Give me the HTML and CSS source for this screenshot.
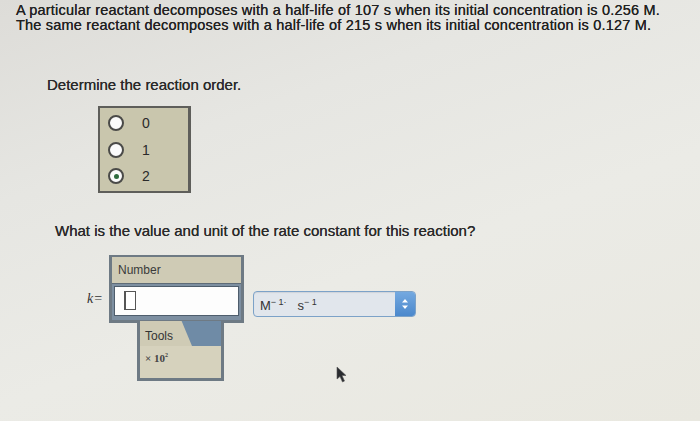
FILE: index.html
```html
<!DOCTYPE html>
<html>
<head>
<meta charset="utf-8">
<link rel="stylesheet" href="styles.css">
</head>
<body>
<div class="page">
  <p class="intro">A particular reactant decomposes with a half-life of 107 s when its initial concentration is 0.256 M.<br>The same reactant decomposes with a half-life of 215 s when its initial concentration is 0.127 M.</p>
  <p class="prompt">Determine the reaction order.</p>
  <div class="choices">
    <div class="choice"><span class="radio"></span><span class="lbl">0</span></div>
    <div class="choice"><span class="radio"></span><span class="lbl">1</span></div>
    <div class="choice"><span class="radio on"></span><span class="lbl">2</span></div>
  </div>
  <p class="prompt2">What is the value and unit of the rate constant for this reaction?</p>
  <div class="answer">
    <span class="k">k<span class="eq">=</span></span>
    <div class="numcol">
      <div class="number">
        <div class="numhead">Number</div>
        <div class="numframe"><div class="numinput"><span class="caret"></span></div></div>
      </div>
      <div class="tools">
        <div class="toolstop"><span class="toolstab">Tools</span></div>
        <div class="toolsbody">&times; 10<sup>2</sup></div>
      </div>
    </div>
    <div class="select">
      <span class="selval">M<sup>&minus; 1</sup><span class="dot">·</span>&nbsp;&nbsp;&nbsp;s<sup>&minus; 1</sup></span>
      <span class="selbtn"><svg width="8" height="12" viewBox="0 0 8 12"><path d="M4 1 L7 4.5 L1 4.5 Z M4 11 L7 7.5 L1 7.5 Z" fill="#fff"/></svg></span>
    </div>
  </div>
  <svg class="pointer" width="12" height="17" viewBox="0 0 12 17"><path d="M1 1 L1 13 L4 10.5 L6.5 16 L8.5 15 L6 9.5 L10 9.5 Z" fill="#2a2c30" stroke="#555" stroke-width="0.6"/></svg>
</div>
</body>
</html>
```
FILE: styles.css
```css
html, body { margin: 0; padding: 0; }
body {
  width: 700px;
  height: 421px;
  overflow: hidden;
  background: linear-gradient(160deg, #dddcd8 0%, #e6e6e2 30%, #ebebe6 60%, #e9e8e0 100%);
  font-family: "Liberation Sans", Arial, sans-serif;
  color: #2a2a2a;
}
.page {
  position: relative;
  height: 421px;
  padding: 3px 0 0 16px;
  box-sizing: border-box;
}
.intro {
  margin: 0;
  font-size: 14.5px;
  line-height: 15px;
  letter-spacing: 0.2px;
  color: #222;
  text-shadow: 0 0 0.6px #222;
}
.prompt {
  margin: 44px 0 0 31px;
  font-size: 15px;
  line-height: 16px;
  color: #2a2a2a;
  text-shadow: 0 0 0.5px #2a2a2a;
}
.choices {
  margin: 13px 0 0 82px;
  width: 88px;
  height: 81px;
  background: #c9c6ad;
  border: 2px solid #5e5e5a;
  border-right-width: 3px;
  box-sizing: content-box;
  padding-top: 2px;
}
.choice {
  display: flex;
  align-items: center;
  height: 26.5px;
  padding-left: 8px;
}
.radio {
  width: 12px;
  height: 12px;
  border-radius: 50%;
  border: 2.5px solid #4a4a48;
  background: #fbfbfb;
  box-sizing: content-box;
  display: flex;
  align-items: center;
  justify-content: center;
}
.radio.on::after {
  content: "";
  width: 5px;
  height: 5px;
  border-radius: 50%;
  background: #2f6b3e;
}
.lbl {
  margin-left: 18px;
  font-size: 14px;
  color: #2a2a2a;
}
.prompt2 {
  margin: 30px 0 0 39px;
  font-size: 15px;
  line-height: 16px;
  color: #2a2a2a;
  text-shadow: 0 0 0.5px #2a2a2a;
}
.answer {
  display: flex;
  align-items: flex-start;
  margin-top: 16px;
}
.k {
  font-family: "Liberation Serif", serif;
  font-style: italic;
  font-size: 14px;
  color: #333;
  margin: 36px 0 0 71px;
  width: 22px;
}
.eq { font-style: normal; margin-left: 1px; }
.numcol {
  display: flex;
  flex-direction: column;
}
.number {
  width: 135px;
  height: 68px;
  border: 3px solid #6e7a84;
  border-top-width: 2px;
  box-sizing: border-box;
  background: #7a8c9e;
  display: flex;
  flex-direction: column;
}
.numhead {
  height: 27px;
  background: #cfcbb5;
  font-size: 12px;
  color: #3a3a3a;
  padding: 6px 0 0 6px;
  box-sizing: border-box;
  border-bottom: 1px solid #5f6c78;
}
.numframe {
  flex: 1;
  padding: 2px 2px 4px 2px;
  background: #7d8fa1;
}
.numinput {
  height: 100%;
  background: #fdfdfd;
  border: 1px solid #4e5d6c;
  box-sizing: border-box;
  padding: 4px 0 0 9px;
}
.caret {
  display: block;
  width: 12px;
  height: 19px;
  border: 1.5px solid #555;
  box-sizing: border-box;
  border-left-width: 2px;
  background: #fff;
}
.tools {
  margin: -2px 0 0 28px;
  width: 87px;
  height: 60px;
  border: 3px solid #6e7a84;
  border-top: none;
  box-sizing: border-box;
  background: #d6d2bd;
  display: flex;
  flex-direction: column;
}
.toolstop {
  height: 25px;
  background: #6f8ba6;
  display: flex;
}
.toolstab {
  width: 52px;
  background: #cfcbb5;
  clip-path: polygon(0 0, 80% 0, 100% 100%, 0 100%);
  font-size: 12px;
  color: #333;
  padding: 8px 0 0 5px;
  box-sizing: border-box;
}
.toolsbody {
  flex: 1;
  font-family: "Liberation Serif", serif;
  font-size: 11px;
  font-weight: bold;
  color: #444;
  padding: 6px 0 0 5px;
}
.toolsbody sup { font-size: 6px; }
.select {
  margin: 36px 0 0 9px;
  width: 163px;
  height: 26px;
  border: 1px solid #7ca2c8;
  border-radius: 4px;
  box-sizing: border-box;
  background: #e1e6ec;
  display: flex;
  overflow: hidden;
  box-shadow: inset 0 1px 1px rgba(0,0,0,0.08);
}
.selval {
  flex: 1;
  font-size: 13px;
  color: #333;
  padding: 5px 0 0 6px;
}
.selval sup { font-size: 9px; }
.dot { font-size: 9px; vertical-align: super; }
.selbtn {
  width: 20px;
  background: linear-gradient(#74a9e0, #4b88cc);
  display: flex;
  align-items: center;
  justify-content: center;
}
.pointer {
  position: absolute;
  left: 336px;
  top: 366px;
  filter: blur(0.4px);
}
```
